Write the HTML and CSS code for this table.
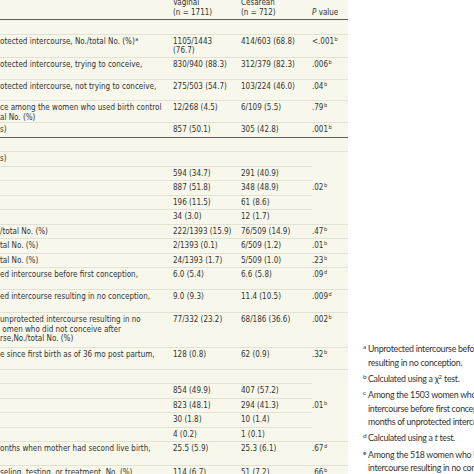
FILE: index.html
```html
<!DOCTYPE html>
<html lang="en">
<head>
<meta charset="utf-8">
<title>Table</title>
<link rel="stylesheet" href="styles.css">
</head>
<body>
<div class="page">
  <table class="data">
    <colgroup>
      <col class="c-label"><col class="c-vag"><col class="c-ces"><col class="c-p">
    </colgroup>
    <thead>
      <tr class="head">
        <th></th>
        <th>Vaginal<br>(n = 1711)</th>
        <th>Cesarean<br>(n = 712)</th>
        <th><i>P</i> value</th>
      </tr>
    </thead>
    <tbody>
      <tr><td></td><td></td><td></td><td></td></tr>
      <tr class="l2b"><td>otected intercourse, No./total No. (%)<sup>a</sup></td><td>1105/1443<br>(76.7)</td><td>414/603 (68.8)</td><td>&lt;.001<sup>b</sup></td></tr>
      <tr class="l2"><td>otected intercourse, trying to conceive,</td><td>830/940 (88.3)</td><td>312/379 (82.3)</td><td>.006<sup>b</sup></td></tr>
      <tr class="l2"><td>otected intercourse, not trying to conceive,</td><td>275/503 (54.7)</td><td>103/224 (46.0)</td><td>.04<sup>b</sup></td></tr>
      <tr class="l2"><td>ce among the women who used birth control<br>al No. (%)</td><td>12/268 (4.5)</td><td>6/109 (5.5)</td><td>.79<sup>b</sup></td></tr>
      <tr class="end"><td>s)</td><td>857 (50.1)</td><td>305 (42.8)</td><td>.001<sup>b</sup></td></tr>
      <tr><td></td><td></td><td></td><td></td></tr>
      <tr><td>s)</td><td></td><td></td><td class="span" rowspan="5">.02<sup>b</sup></td></tr>
      <tr><td></td><td>594 (34.7)</td><td>291 (40.9)</td></tr>
      <tr><td></td><td>887 (51.8)</td><td>348 (48.9)</td></tr>
      <tr><td></td><td>196 (11.5)</td><td>61 (8.6)</td></tr>
      <tr><td></td><td>34 (3.0)</td><td>12 (1.7)</td></tr>
      <tr><td>/total No. (%)</td><td>222/1393 (15.9)</td><td>76/509 (14.9)</td><td>.47<sup>b</sup></td></tr>
      <tr><td>tal No. (%)</td><td>2/1393 (0.1)</td><td>6/509 (1.2)</td><td>.01<sup>b</sup></td></tr>
      <tr><td>tal No. (%)</td><td>24/1393 (1.7)</td><td>5/509 (1.0)</td><td>.23<sup>b</sup></td></tr>
      <tr class="l2"><td>ed intercourse before first conception,</td><td>6.0 (5.4)</td><td>6.6 (5.8)</td><td>.09<sup>d</sup></td></tr>
      <tr class="l2b"><td>ed intercourse resulting in no conception,</td><td>9.0 (9.3)</td><td>11.4 (10.5)</td><td>.009<sup>d</sup></td></tr>
      <tr class="l3"><td>unprotected intercourse resulting in no<br>&nbsp;omen who did not conceive after<br>rse,No./total No. (%)</td><td>77/332 (23.2)</td><td>68/186 (36.6)</td><td>.002<sup>b</sup></td></tr>
      <tr class="l2"><td>e since first birth as of 36 mo post partum,</td><td>128 (0.8)</td><td>62 (0.9)</td><td>.32<sup>b</sup></td></tr>
      <tr><td></td><td></td><td></td><td class="span" rowspan="5">.01<sup>b</sup></td></tr>
      <tr><td></td><td>854 (49.9)</td><td>407 (57.2)</td></tr>
      <tr><td></td><td>823 (48.1)</td><td>294 (41.3)</td></tr>
      <tr><td></td><td>30 (1.8)</td><td>10 (1.4)</td></tr>
      <tr><td></td><td>4 (0.2)</td><td>1 (0.1)</td></tr>
      <tr class="l2b"><td>onths when mother had second live birth,</td><td>25.5 (5.9)</td><td>25.3 (6.1)</td><td>.67<sup>d</sup></td></tr>
      <tr><td>seling, testing, or treatment, No. (%)</td><td>114 (6.7)</td><td>51 (7.2)</td><td>.66<sup>b</sup></td></tr>
    </tbody>
  </table>
  <div class="notes">
    <p><sup>a</sup>Unprotected intercourse before first conception<br>resulting in no conception.</p>
    <p><sup>b</sup>Calculated using a χ<sup class="sq">2</sup> test.</p>
    <p><sup>c</sup>Among the 1503 women who had unprotected<br>intercourse before first conception, the mean<br>months of unprotected intercourse before</p>
    <p><sup>d</sup>Calculated using a <i>t</i> test.</p>
    <p><sup>e</sup>Among the 518 women who had unprotected<br>intercourse resulting in no conception, the<br>months of unprotected intercourse</p>
  </div>
</div>
</body>
</html>
```

FILE: styles.css
```css
html, body {
  margin: 0;
  padding: 0;
  background: #ffffff;
  overflow: hidden;
}
body {
  width: 474px;
  height: 474px;
}
.page {
  display: flex;
  align-items: flex-start;
  gap: 15px;
}
.data {
  flex: none;
  width: 348px;
  margin-top: -2px;
  table-layout: fixed;
  border-collapse: collapse;
  background: #f7f7eb;
  font-family: "DejaVu Sans Condensed", "DejaVu Sans", sans-serif;
  font-stretch: condensed;
  font-size: 8px;
  line-height: 9.5px;
  color: #333333;
}
.c-label { width: 173px; }
.c-vag { width: 68px; }
.c-ces { width: 71px; }
.c-p { width: 36px; }
.data th {
  font-weight: normal;
  text-align: left;
  vertical-align: bottom;
  padding: 0 0 1px 0;
  height: 18px;
  line-height: 10px;
  white-space: nowrap;
  border-bottom: 1.5px solid #5c5c5c;
}
.data td {
  padding: 2px 0 0 0;
  height: 11.5px;
  vertical-align: top;
  white-space: nowrap;
  overflow: hidden;
  border-bottom: 1px solid #e2e2d3;
}
.data tr.l2 td { height: 18.5px; }
.data tr.l2b td { height: 20.5px; }
.data tr.l3 td { height: 32px; }
.data tr.end td { border-bottom: 1.5px solid #5c5c5c; }
.data td.span { vertical-align: middle; padding-top: 0; }
.data sup {
  font-size: 5.5px;
  line-height: 0;
  vertical-align: 3px;
  margin-left: 0.5px;
}
.notes {
  flex: none;
  padding-top: 342px;
  font-family: Lato, "Liberation Sans", sans-serif;
  font-size: 8.8px;
  letter-spacing: -0.28px;
  line-height: 13.6px;
  color: #333333;
  white-space: nowrap;
}
.notes p {
  margin: 0 0 2.6px 0;
  padding-left: 5px;
  text-indent: -5px;
}
.notes sup {
  font-size: 6.5px;
  line-height: 0;
  vertical-align: 3px;
  display: inline-block;
  width: 5px;
  text-indent: 0;
  letter-spacing: 0;
}
.notes sup.sq {
  width: auto;
  font-size: 6px;
}
```
